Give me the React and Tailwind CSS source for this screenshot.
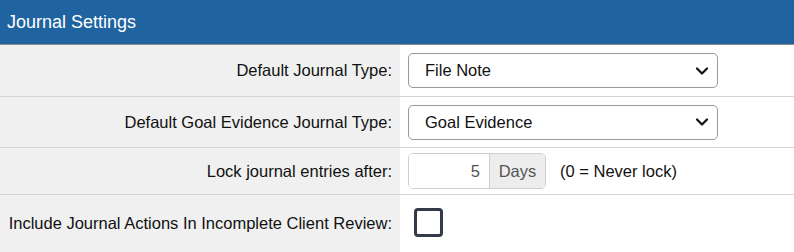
import React from "react";

const Chevron = () => (
  <svg
    className="absolute right-[8px] top-1/2 -translate-y-1/2 pointer-events-none"
    width="14"
    height="14"
    viewBox="0 0 14 14"
    fill="none"
  >
    <path d="M2 4.5l5 5 5-5" stroke="#111" strokeWidth="2.2" strokeLinecap="round" strokeLinejoin="round" />
  </svg>
);

const SelectBox = ({ value }) => (
  <div className="relative w-[310px] h-[35px] rounded-[5px] border border-[#9a9a9a] bg-white flex items-center pl-[16px] text-[16.5px] text-[#111]">
    {value}
    <Chevron />
  </div>
);

const Row = ({ label, children, className }) => (
  <div className={`flex ${className}`}>
    <div className="w-[400px] shrink-0 bg-[#f0f0f0] flex items-center justify-end pr-[8px] text-[16.5px] text-[#111]">
      {label}
    </div>
    <div className="flex-1 bg-white flex items-center pl-[8px]">{children}</div>
  </div>
);

export default function App() {
  return (
    <div className="w-[794px] h-[252px] bg-white overflow-hidden" style={{ fontFamily: '"Liberation Sans", Arial, sans-serif' }}>
      <div className="h-[45px] bg-[#1f64a0] border-b border-[#8a8a8a] flex items-center px-[7px] text-white text-[18px]">
        Journal Settings
      </div>
      <Row label="Default Journal Type:" className="h-[52px] border-b border-[#d3d3d3]">
        <SelectBox value="File Note" />
      </Row>
      <Row label="Default Goal Evidence Journal Type:" className="h-[51px] border-b border-[#d3d3d3]">
        <SelectBox value="Goal Evidence" />
      </Row>
      <Row label="Lock journal entries after:" className="h-[47px] border-b border-[#d3d3d3]">
        <div className="flex h-[36px] rounded-[5px] border border-[#cfcfcf] overflow-hidden">
          <div className="w-[80px] bg-white flex items-center justify-end pr-[9px] text-[16.5px] text-[#555]">5</div>
          <div className="w-[56px] bg-[#ededed] border-l border-[#cfcfcf] flex items-center justify-center text-[16.5px] text-[#555]">
            Days
          </div>
        </div>
        <span className="ml-[14px] text-[16.5px] text-[#111]">(0 = Never lock)</span>
      </Row>
      <Row label="Include Journal Actions In Incomplete Client Review:" className="h-[57px]">
        <div className="ml-[6px] -mt-[3px] w-[29px] h-[29px] rounded-[4px] border-[3px] border-[#333b48] bg-white" />
      </Row>
    </div>
  );
}
